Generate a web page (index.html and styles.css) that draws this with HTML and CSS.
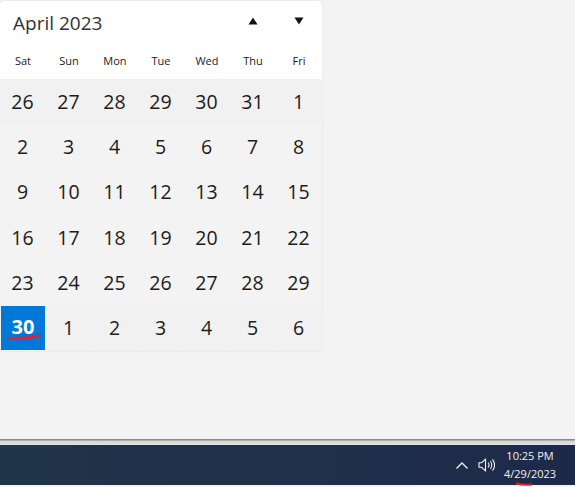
FILE: index.html
```html
<!DOCTYPE html>
<html lang="en">
<head>
<meta charset="utf-8">
<title>Calendar</title>
<link rel="stylesheet" href="styles.css">
</head>
<body>
<main class="desk">
  <section class="cal">
    <header class="cal-head">
      <div class="cal-top">
        <span class="month">April 2023</span>
        <div class="navs">
          <button class="nav" aria-label="Previous"><svg width="10" height="8" viewBox="0 0 10 8"><path d="M5 .5 9.500 7.500H.5Z" fill="#111"/></svg></button>
          <button class="nav" aria-label="Next"><svg width="10" height="8" viewBox="0 0 10 8"><path d="M5 7.500.5.5h9Z" fill="#111"/></svg></button>
        </div>
      </div>
      <div class="dows">
        <span>Sat</span><span>Sun</span><span>Mon</span><span>Tue</span><span>Wed</span><span>Thu</span><span>Fri</span>
      </div>
    </header>
    <div class="grid">
      <div class="day">26</div><div class="day">27</div><div class="day">28</div><div class="day">29</div><div class="day">30</div><div class="day">31</div><div class="day">1</div>
      <div class="day cur">2</div><div class="day cur">3</div><div class="day cur">4</div><div class="day cur">5</div><div class="day cur">6</div><div class="day cur">7</div><div class="day cur">8</div>
      <div class="day cur">9</div><div class="day cur">10</div><div class="day cur">11</div><div class="day cur">12</div><div class="day cur">13</div><div class="day cur">14</div><div class="day cur">15</div>
      <div class="day cur">16</div><div class="day cur">17</div><div class="day cur">18</div><div class="day cur">19</div><div class="day cur">20</div><div class="day cur">21</div><div class="day cur">22</div>
      <div class="day cur">23</div><div class="day cur">24</div><div class="day cur">25</div><div class="day cur">26</div><div class="day cur">27</div><div class="day cur">28</div><div class="day cur">29</div>
      <div class="day last"><div class="sel">30<svg class="mark" width="32" height="6" viewBox="0 0 32 6"><path d="M1.500 4.300C10 4.500 22 4 30.500 1.800" fill="none" stroke="#e3202c" stroke-width="2.800" stroke-linecap="round"/></svg></div></div><div class="day">1</div><div class="day">2</div><div class="day">3</div><div class="day">4</div><div class="day">5</div><div class="day">6</div>
    </div>
  </section>
</main>
<div class="shadow"></div>
<footer class="taskbar">
  <svg class="chev" width="14" height="9" viewBox="0 0 14 9"><path d="M1.500 7.500 7 2l5.500 5.500" fill="none" stroke="#f2f2f2" stroke-width="1.300"/></svg>
  <svg class="vol" width="17" height="14" viewBox="0 0 17 14"><path d="M1 4.700h2.600L7.500 1.200v11.600L3.600 9.300H1Z M10 4.500c1.200 1.400 1.200 3.600 0 5 M12.300 3c2 2.200 2 5.800 0 8 M14.500 1.300c2.800 3.200 2.800 8.200 0 11.400" fill="none" stroke="#f2f2f2" stroke-width="1.100"/></svg>
  <div class="clock">
    <span>10:25 PM</span>
    <span class="date">4/29/2023<svg class="mark2" width="18" height="5" viewBox="0 0 18 5"><path d="M1 1.200C6 3 11 3 17 2.600" fill="none" stroke="#e3202c" stroke-width="2"/></svg></span>
  </div>
</footer>
<div class="bottom"></div>
</body>
</html>
```
FILE: styles.css
```css
* { box-sizing: border-box; }
html, body { margin: 0; height: 100%; }
body {
  width: 575px;
  height: 487px;
  overflow: hidden;
  display: flex;
  flex-direction: column;
  background: #f3f3f3;
  font-family: "Open Sans", "Noto Sans", sans-serif;
  font-stretch: 92%;
  color: #1a1a1a;
}
.desk { flex: 1; padding: 1px 0 0 0; min-height: 0; }
.cal {
  width: 322px;
  height: 350px;
  display: flex;
  flex-direction: column;
  border-radius: 4px;
  overflow: hidden;
  background: #f2f2f2;
  box-shadow: 0 0 1px rgba(0,0,0,.28);
}
.cal-head { background: #fff; height: 78px; flex: none; }
.cal-top { display: flex; justify-content: space-between; height: 44px; padding: 0 0 0 13px; align-items: center; }
.month { font-size: 19px; line-height: 44px; color: #333; }
.navs { display: flex; }
.nav { width: 46px; height: 34px; margin-bottom: 4px; border: 0; padding: 0; background: none; display: flex; align-items: center; justify-content: center; }
.dows { display: grid; grid-template-columns: repeat(7, 46px); height: 30px; align-items: center; font-size: 11px; text-align: center; color: #222; }
.grid { flex: 1; display: grid; grid-template-columns: repeat(7, 46px); grid-auto-rows: 45.300px; }
.day { display: flex; align-items: center; justify-content: center; font-size: 19.500px; padding: 0 1px 1px 0; color: #1c1c1c; background: #f1f1f1; box-shadow: inset -1px 0 0 #f3f3f3; }
.day.cur { background: #f3f3f3; box-shadow: none; }
.day.last { padding: 1px 1px 1px; background: #f3f3f3; box-shadow: none; }
.sel { position: relative; flex: 1; align-self: stretch; display: flex; align-items: center; justify-content: center; padding-bottom: 3px; background: #0078d7; color: #fff; font-weight: 700; font-size: 20px; }
.mark { position: absolute; left: 7px; top: 28px; }
.shadow { flex: none; height: 6px; background: linear-gradient(#8a8a8a 0, #8a8a8a 1px, #d4d4d4 2px, #e3e3e3 100%); }
.taskbar {
  flex: none;
  height: 40px;
  display: flex;
  align-items: center;
  background: linear-gradient(90deg, #203449, #1f2f4a 60%, #1e2949);
  color: #f2f2f2;
  padding-left: 455px;
}
.chev { margin-right: 9px; }
.vol { margin-right: 9px; }
.clock { display: flex; flex-direction: column; align-items: center; font-size: 11px; line-height: 18px; }
.date { position: relative; }
.mark2 { position: absolute; left: 11px; top: 17px; }
.bottom { flex: none; height: 2px; background: #f3f3f3; }
```
